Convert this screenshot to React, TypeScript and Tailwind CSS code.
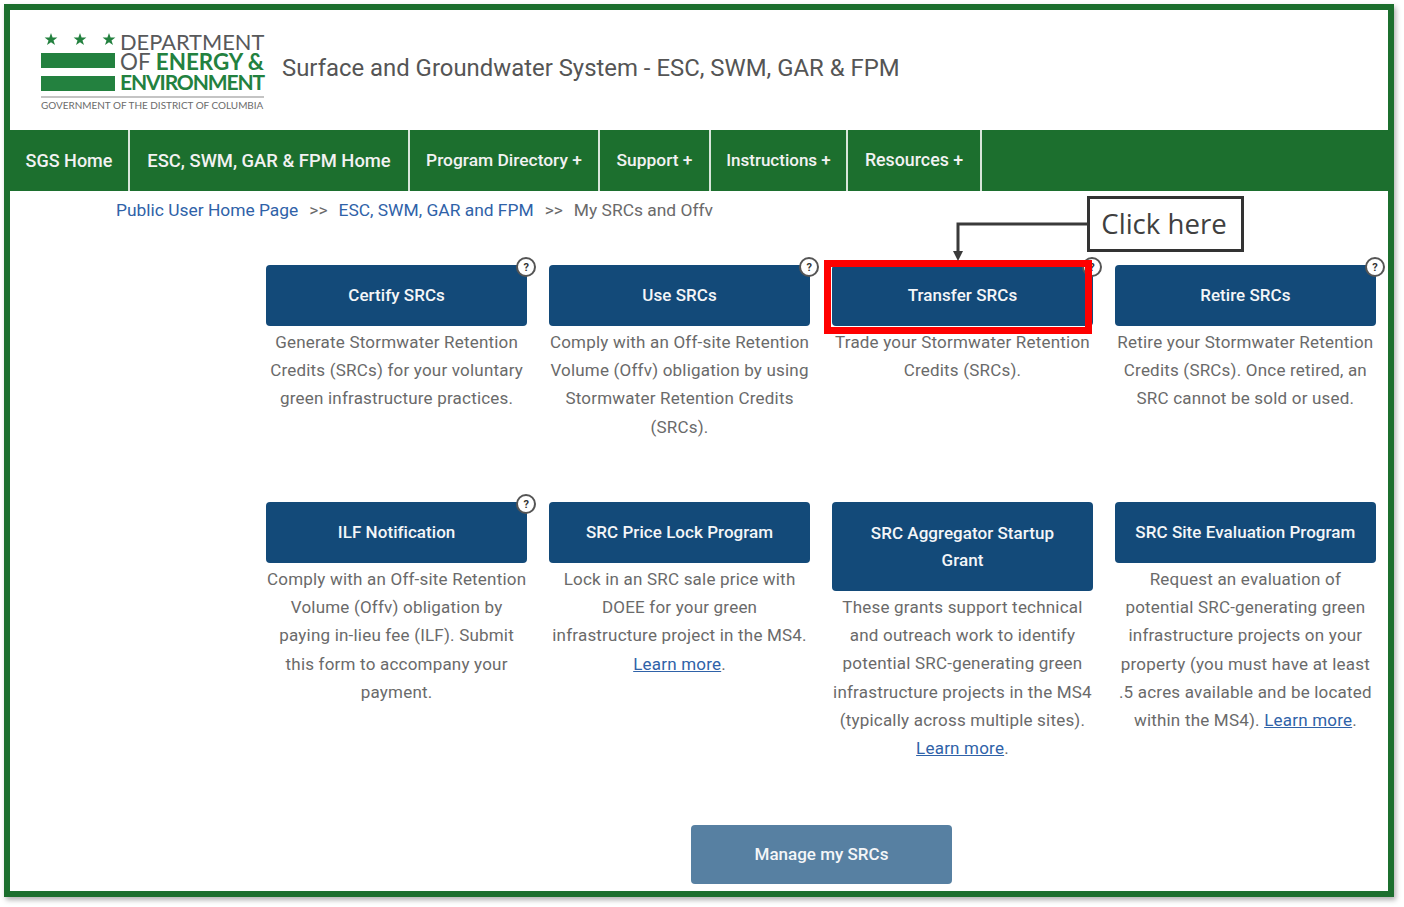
const navItems = [
  { label: "SGS Home", width: "w-[120px]", size: "text-[18px]" },
  { label: "ESC, SWM, GAR & FPM Home", width: "w-[280px]", size: "text-[18.4px]" },
  { label: "Program Directory +", width: "w-[190px]", size: "text-[17.4px]" },
  { label: "Support +", width: "w-[111px]", size: "text-[17.4px]" },
  { label: "Instructions +", width: "w-[137px]", size: "text-[17px]" },
  { label: "Resources +", width: "w-[134px]", size: "text-[17.8px]" },
]

interface Card {
  title: React.ReactNode
  help?: boolean
  tall?: boolean
  body: React.ReactNode
}

const Learn = () => <a className="text-[#2f62a8] underline">Learn more</a>

const cards: Card[] = [
  {
    title: "Certify SRCs",
    help: true,
    body: <>Generate Stormwater Retention<br />Credits (SRCs) for your voluntary<br />green infrastructure practices.</>,
  },
  {
    title: "Use SRCs",
    help: true,
    body: <>Comply with an Off-site Retention<br />Volume (Offv) obligation by using<br />Stormwater Retention Credits<br />(SRCs).</>,
  },
  {
    title: "Transfer SRCs",
    help: true,
    body: <>Trade your Stormwater Retention<br />Credits (SRCs).</>,
  },
  {
    title: "Retire SRCs",
    help: true,
    body: <>Retire your Stormwater Retention<br />Credits (SRCs). Once retired, an<br />SRC cannot be sold or used.</>,
  },
  {
    title: "ILF Notification",
    help: true,
    body: <>Comply with an Off-site Retention<br />Volume (Offv) obligation by<br />paying in-lieu fee (ILF). Submit<br />this form to accompany your<br />payment.</>,
  },
  {
    title: "SRC Price Lock Program",
    body: <>Lock in an SRC sale price with<br />DOEE for your green<br />infrastructure project in the MS4.<br /><Learn />.</>,
  },
  {
    title: <>SRC Aggregator Startup<br />Grant</>,
    tall: true,
    body: <>These grants support technical<br />and outreach work to identify<br />potential SRC-generating green<br />infrastructure projects in the MS4<br />(typically across multiple sites).<br /><Learn />.</>,
  },
  {
    title: "SRC Site Evaluation Program",
    body: <>Request an evaluation of<br />potential SRC-generating green<br />infrastructure projects on your<br />property (you must have at least<br />.5 acres available and be located<br />within the MS4). <Learn />.</>,
  },
]

function Logo() {
  return (
    <div className="relative h-[80px] w-[224px] shrink-0">
      <svg width="76" height="61" viewBox="0 0 76 61" className="absolute left-0 top-0">
        <g fill="#23813f">
          <path d="M10 3l1.6 4.6h4.8l-3.9 2.9 1.5 4.6-4-2.8-4 2.8 1.5-4.6-3.9-2.9h4.8z" />
          <path d="M39 3l1.6 4.6h4.8l-3.9 2.9 1.5 4.6-4-2.8-4 2.8 1.5-4.6-3.9-2.9h4.8z" />
          <path d="M68 3l1.6 4.6h4.8l-3.9 2.9 1.5 4.6-4-2.8-4 2.8 1.5-4.6-3.9-2.9h4.8z" />
          <rect x="0" y="23" width="74" height="15" />
          <rect x="0" y="46" width="74" height="15" />
        </g>
      </svg>
      <div className="absolute left-[79px] top-[2px] font-['Lato',sans-serif] text-[21.8px] leading-[20px] text-[#58595b] whitespace-nowrap">
        <div>DEPARTMENT</div>
        <div className="text-[22.4px]">OF <span className="font-bold text-[#23813f]">ENERGY &amp;</span></div>
        <div className="text-[21px] font-bold tracking-[-1.1px] text-[#23813f]">ENVIRONMENT</div>
      </div>
      <div className="absolute left-0 top-[66px] w-[223px] border-t-2 border-[#c4c4c4] pt-[1px] font-['Lato',sans-serif] text-[9.95px] leading-[12px] whitespace-nowrap text-[#6b6b6b]">
        GOVERNMENT OF THE DISTRICT OF COLUMBIA
      </div>
    </div>
  )
}

function HelpBadge() {
  return (
    <span className="absolute right-[-9px] top-[-8px] flex h-[20px] w-[20px] items-center justify-center rounded-full border-2 border-[#555] bg-white text-[11px] font-bold leading-none text-[#333]">
      ?
    </span>
  )
}

function CardBlock({ card }: { card: Card }) {
  return (
    <div className="text-center">
      <div
        className={`relative flex items-center justify-center rounded-[4px] bg-[#134a79] px-4 text-[17px] font-medium leading-[27px] tracking-[0.05px] text-[#f4f6f8] ${
          card.tall ? "h-[89px]" : "h-[61px]"
        }`}
      >
        <span>{card.title}</span>
        {card.help && <HelpBadge />}
      </div>
      <p className="mt-[2px] whitespace-nowrap text-[17px] leading-[28.2px] tracking-[0.2px] text-[#6a6a6a]">{card.body}</p>
    </div>
  )
}

export default function App() {
  return (
    <div className="h-[907px] w-[1404px] overflow-hidden bg-white pl-[4px] pt-[4px] font-['Roboto',sans-serif]">
      <div className="relative h-[893px] w-[1390px] border-[6px] border-[#1c6f2e] bg-white shadow-[2px_3px_5px_rgba(0,0,0,0.3)]">
        <header className="flex h-[120px] items-center">
          <div className="ml-[31px]">
            <Logo />
          </div>
          <h1 className="mb-[2px] ml-[17px] text-[23.9px] font-normal text-[#555]">
            Surface and Groundwater System - ESC, SWM, GAR &amp; FPM
          </h1>
        </header>

        <nav className="flex h-[61px] bg-[#1c6f2e] font-medium text-[#f2f2f2]">
          {navItems.map((item) => (
            <a key={item.label} className={`flex items-center justify-center border-r-2 border-[#d8e6da] whitespace-nowrap ${item.width} ${item.size}`}>
              {item.label}
            </a>
          ))}
        </nav>

        <div className="flex h-[39px] items-center gap-[11px] pl-[106px] text-[17.4px] text-[#6a6a6a]">
          <a className="text-[#2f62a8]">Public User Home Page</a>
          <span>&gt;&gt;</span>
          <a className="text-[#2f62a8]">ESC, SWM, GAR and FPM</a>
          <span>&gt;&gt;</span>
          <span>My SRCs and Offv</span>
        </div>

        <div className="ml-[256px] mt-[35px] grid w-[1110px] grid-cols-4 gap-x-[21.7px] gap-y-0">
          {cards.map((card, i) => (
            <div key={i} className={i < 4 ? "h-[237px]" : ""}>
              <CardBlock card={card} />
            </div>
          ))}
        </div>

        <div className="absolute left-[681px] top-[815px] flex h-[59px] w-[261px] items-center justify-center rounded-[4px] bg-[#5780a2] text-[17px] font-medium text-[#f4f6f8]">
          Manage my SRCs
        </div>

        {/* annotation laid over the page */}
        <div className="absolute left-[814px] top-[250px] h-[74px] w-[268px] border-[7px] border-[#ff0000]" />
        <div className="absolute left-[1077px] top-[186px] flex h-[56px] w-[157px] items-center justify-center border-[3px] border-[#333] bg-white pr-[3px] font-['Open_Sans',sans-serif] text-[27.6px] text-[#404040]">
          Click here
        </div>
        <svg width="140" height="45" viewBox="0 0 140 45" className="absolute left-[940px] top-[208px]">
          <path d="M138 6H8V36" fill="none" stroke="#3a3a3a" strokeWidth="3" />
          <path d="M3 33h10l-5 10z" fill="#3a3a3a" />
        </svg>
      </div>
    </div>
  )
}
